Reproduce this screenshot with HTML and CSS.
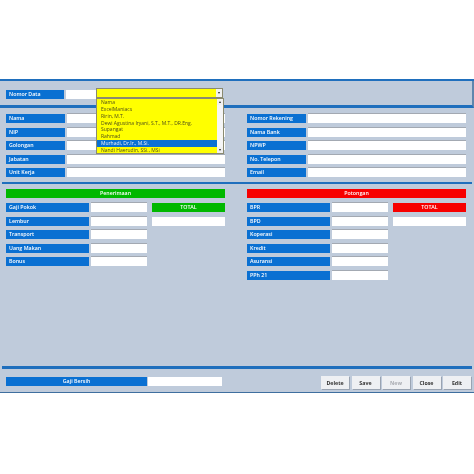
FILE: index.html
```html
<!DOCTYPE html>
<html lang="en">

<head>
  <meta charset="UTF-8" />
  <title>Data Gaji</title>
  <link rel="stylesheet" href="styles.css">
</head>

<body>
  <div class="window">
    <div class="section top">
      <div class="label top-label">Nomor Data</div>
      <div class="input top-input"></div>
      <div class="combo-wrap">
        <div class="combo">
          <span class="combo-value"></span>
          <span class="combo-btn"><span class="arrow"></span></span>
        </div>
        <div class="dropdown">
          <div class="dropdown-list">
            <div class="item">Nama</div>
            <div class="item">ExcelManiacs</div>
            <div class="item">Ririn, M.T.</div>
            <div class="item">Dewi Agustina Iryani, S.T., M.T., DR.Eng.</div>
            <div class="item">Supangat</div>
            <div class="item">Rahmad</div>
            <div class="item selected">Murhadi, Dr.Ir., M.Si.</div>
            <div class="item">Nandi Haerudin, SSi., MSi</div>
          </div>
          <div class="scrollbar">
            <span class="combo-btn"><span class="arrow up"></span></span>
            <span class="combo-btn"><span class="arrow"></span></span>
          </div>
        </div>
      </div>
    </div>

    <div class="section form">
      <div class="form-col">
        <div class="row"><div class="label">Nama</div><div class="input"></div></div>
        <div class="row"><div class="label">NIP</div><div class="input"></div></div>
        <div class="row"><div class="label">Golongan</div><div class="input"></div></div>
        <div class="row"><div class="label">Jabatan</div><div class="input"></div></div>
        <div class="row"><div class="label">Unit Kerja</div><div class="input"></div></div>
      </div>
      <div class="form-col">
        <div class="row"><div class="label">Nomor Rekening</div><div class="input"></div></div>
        <div class="row"><div class="label">Nama Bank</div><div class="input"></div></div>
        <div class="row"><div class="label">NPWP</div><div class="input"></div></div>
        <div class="row"><div class="label">No. Telepon</div><div class="input"></div></div>
        <div class="row"><div class="label">Email</div><div class="input"></div></div>
      </div>
    </div>

    <div class="section money">
      <div class="money-col">
        <div class="money-head green">Penerimaan</div>
        <div class="money-body">
          <div class="money-rows">
            <div class="row"><div class="label wide">Gaji Pokok</div><div class="input short"></div></div>
            <div class="row"><div class="label wide">Lembur</div><div class="input short"></div></div>
            <div class="row"><div class="label wide">Transport</div><div class="input short"></div></div>
            <div class="row"><div class="label wide">Uang Makan</div><div class="input short"></div></div>
            <div class="row"><div class="label wide">Bonus</div><div class="input short"></div></div>
          </div>
          <div class="total">
            <div class="total-head green">TOTAL</div>
            <div class="input total-input"></div>
          </div>
        </div>
      </div>
      <div class="money-col">
        <div class="money-head red">Potongan</div>
        <div class="money-body">
          <div class="money-rows">
            <div class="row"><div class="label wide">BPR</div><div class="input short"></div></div>
            <div class="row"><div class="label wide">BPD</div><div class="input short"></div></div>
            <div class="row"><div class="label wide">Koperasi</div><div class="input short"></div></div>
            <div class="row"><div class="label wide">Kredit</div><div class="input short"></div></div>
            <div class="row"><div class="label wide">Asuransi</div><div class="input short"></div></div>
            <div class="row"><div class="label wide">PPh 21</div><div class="input short"></div></div>
          </div>
          <div class="total">
            <div class="total-head red">TOTAL</div>
            <div class="input total-input"></div>
          </div>
        </div>
      </div>
    </div>

    <div class="section bottom">
      <div class="label net-label">Gaji Bersih</div>
      <div class="input net-input"></div>
      <div class="buttons">
        <button>Delete</button>
        <button>Save</button>
        <button disabled>New</button>
        <button>Close</button>
        <button>Edit</button>
      </div>
    </div>
  </div>
</body>

</html>
```

FILE: styles.css
```css
body {
  margin: 0;
  background: white;
  font-family: "Open Sans", "DejaVu Sans", sans-serif;
  font-size: 5.3px;
}

.window {
  margin-top: 79px;
  height: 314px;
  display: flex;
  flex-direction: column;
  background: #bfcbdb;
  border-top: 2px solid #1f6fbd;
  border-bottom: 1px solid #3f6f9f;
  box-sizing: border-box;
  filter: blur(0.3px);
}

.section {
  display: flex;
  box-sizing: border-box;
  padding-left: 6px;
}

.top {
  height: 27px;
  padding-top: 7px;
  border-right: 2px solid #5f86ad;
  border-bottom: 3px solid #1f6fbd;
}

.form {
  height: 76px;
  margin: 0 2px;
  padding-top: 6px;
  padding-left: 4px;
  gap: 22px;
  border-bottom: 2px solid #1f6fbd;
}

.money {
  height: 185px;
  margin: 0 2px;
  padding-top: 5px;
  padding-left: 4px;
  gap: 22px;
  border-bottom: 3px solid #1f6fbd;
}

.bottom {
  flex: 1;
  padding-top: 7px;
}

.row {
  display: flex;
  gap: 2px;
  height: 9px;
}

.label {
  width: 59px;
  height: 9px;
  padding-left: 3px;
  box-sizing: border-box;
  background: #0a70d2;
  color: white;
  font-weight: 600;
  line-height: 8px;
  white-space: nowrap;
}

.input {
  flex: 1;
  height: 9px;
  background: white;
  box-shadow: 0 -1px 0 #a3a9b2;
}

/* nomor data row */
.top-label {
  width: 58px;
  margin-top: 2px;
}

.top-input {
  flex: none;
  width: 30px;
  margin: 2px 0 0 2px;
  box-shadow: none;
}

.combo-wrap {
  position: relative;
  width: 127px;
}

.combo {
  display: flex;
  height: 10px;
  background: yellow;
  border: 1px solid #8a8a70;
  box-sizing: border-box;
}

.combo-value {
  flex: 1;
}

.combo-btn {
  width: 6px;
  display: flex;
  align-items: center;
  justify-content: center;
  background: #f1f1f1;
}

.arrow {
  width: 0;
  height: 0;
  border-left: 1.5px solid transparent;
  border-right: 1.5px solid transparent;
  border-top: 2px solid #222;
}

.arrow.up {
  transform: rotate(180deg);
}

.dropdown {
  position: absolute;
  top: 10px;
  left: 0;
  width: 128px;
  height: 56px;
  display: flex;
  background: yellow;
  border: 1px solid #8a8a70;
  box-sizing: border-box;
  z-index: 2;
}

.dropdown-list {
  flex: 1;
  background: yellow;
}

.item {
  height: 6.86px;
  line-height: 6.86px;
  padding-left: 4px;
  color: #4d4d1a;
  font-size: 5px;
  white-space: nowrap;
}

.item.selected {
  background: #0a70d2;
  color: #e6eefa;
}

.scrollbar {
  width: 6px;
  display: flex;
  flex-direction: column;
  justify-content: space-between;
  background: #f6f6f6;
}

.scrollbar .combo-btn {
  height: 6px;
}

/* identitas */
.form-col {
  width: 219px;
  display: flex;
  flex-direction: column;
  gap: 4.6px;
}

/* penerimaan / potongan */
.money-col {
  width: 219px;
}

.money-head {
  height: 9px;
  line-height: 8px;
  text-align: center;
  color: white;
  font-weight: 600;
  margin-bottom: 5px;
}

.green {
  background: #00b800;
}

.red {
  background: #f70000;
}

.money-body {
  display: flex;
  gap: 5px;
}

.money-rows {
  width: 141px;
  display: flex;
  flex-direction: column;
  gap: 4.6px;
}

.wide {
  width: 83px;
}

.total {
  flex: 1;
  display: flex;
  flex-direction: column;
  gap: 4.6px;
}

.total-head {
  height: 9px;
  line-height: 8px;
  text-align: center;
  color: white;
  font-weight: 600;
}

.total-input {
  flex: none;
  box-shadow: none;
}

/* gaji bersih + tombol */
.net-label {
  width: 141px;
  margin-top: 1px;
  text-align: center;
  padding-left: 0;
}

.net-input {
  flex: none;
  width: 74px;
  margin: 1px 0 0 1px;
  box-shadow: none;
}

.buttons {
  margin-left: auto;
  margin-right: 3px;
  display: flex;
  gap: 2.5px;
}

button {
  width: 28px;
  height: 13px;
  padding: 0;
  border: none;
  background: #eef0f3;
  box-shadow: 1px 1px 0 #9aa4b2;
  color: #333;
  font-family: inherit;
  font-size: 5.3px;
  font-weight: 700;
}

button:disabled {
  color: #a9acb2;
}
```
